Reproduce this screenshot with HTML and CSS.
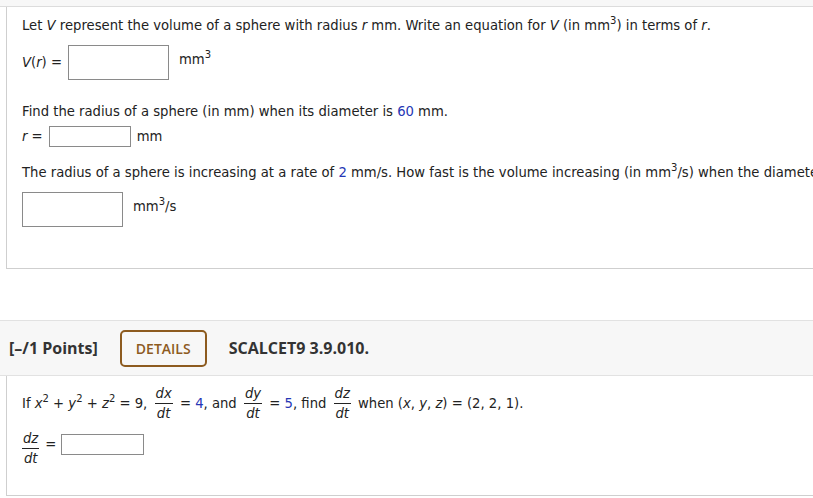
FILE: index.html
```html
<!DOCTYPE html>
<html>
<head>
<meta charset="utf-8">
<link rel="stylesheet" href="styles.css">
</head>
<body>
<div class="topbar"></div>
<div class="qbody q1">
  <p class="line l1">Let <i>V</i> represent the volume of a sphere with radius <i>r</i> mm. Write an equation for <i>V</i> (in mm<sup>3</sup>) in terms of <i>r</i>.</p>
  <div class="row r1"><span><i>V</i>(<i>r</i>) =</span><span class="box big"></span><span class="unit">mm<sup>3</sup></span></div>
  <p class="line l2">Find the radius of a sphere (in mm) when its diameter is <span class="num">60</span> mm.</p>
  <div class="row r2"><span><i>r</i> =</span><span class="box small"></span><span class="unit2">mm</span></div>
  <p class="line l3">The radius of a sphere is increasing at a rate of <span class="num">2</span> mm/s. How fast is the volume increasing (in mm<sup>3</sup>/s) when the diameter is <span class="num">60</span> mm?</p>
  <div class="row r3"><span class="box big"></span><span class="unit">mm<sup>3</sup>/s</span></div>
</div>
<div class="header">
  <span class="points">[–/1 Points]</span>
  <span class="details">DETAILS</span>
  <span class="code">SCALCET9 3.9.010.</span>
</div>
<div class="qbody q2">
  <div class="eq">If <i>x</i><sup>2</sup> + <i>y</i><sup>2</sup> + <i>z</i><sup>2</sup> = 9, <span class="frac"><span class="n"><i>dx</i></span><span class="d"><i>dt</i></span></span> = <span class="num">4</span>, and <span class="frac"><span class="n"><i>dy</i></span><span class="d"><i>dt</i></span></span> = <span class="num">5</span>, find <span class="frac"><span class="n"><i>dz</i></span><span class="d"><i>dt</i></span></span> when (<i>x</i>, <i>y</i>, <i>z</i>) = (2, 2, 1).</div>
  <div class="ans"><span class="frac"><span class="n"><i>dz</i></span><span class="d"><i>dt</i></span></span><span class="eqs">=</span><span class="box mid"></span></div>
</div>
</body>
</html>
```
FILE: styles.css
```css
html, body {
  margin: 0;
  padding: 0;
  background: #fff;
  overflow: hidden;
  width: 813px;
  height: 498px;
}
body {
  font-family: "DejaVu Sans", Verdana, sans-serif;
  font-size: 13.2px;
  color: #222;
}
.topbar {
  height: 6px;
  background: #f7f7f7;
  border-bottom: 1px solid #dcdcdc;
}
.qbody {
  margin-left: 6px;
  border-left: 1px solid #cfcfcf;
  border-bottom: 1px solid #cfcfcf;
  padding-left: 15px;
  box-sizing: border-box;
  white-space: nowrap;
  overflow: hidden;
}
.q1 {
  height: 262px;
  padding-top: 11px;
}
p.line {
  margin: 0;
  line-height: 16px;
}
sup {
  font-size: 10px;
  line-height: 0;
  vertical-align: 6px;
}
.num { color: #2536b5; }
.row {
  display: flex;
  align-items: center;
}
.box {
  display: inline-block;
  border: 1px solid #8a8a8a;
  background: #fff;
  box-sizing: border-box;
}
.big { width: 101px; height: 35px; }
.small { width: 82px; height: 21px; }
.mid { width: 83px; height: 21px; }
.r1 { margin-top: 11px; }
.r1 .box { margin-left: 6px; }
.unit { margin-left: 10px; margin-top: -6px; }
.l2 { margin-top: 24px !important; }
.r2 { margin-top: 6px; }
.r2 .box { margin-left: 6px; }
.unit2 { margin-left: 6px; }
.l3 { margin-top: 18px !important; }
.r3 { margin-top: 11px; }
.header {
  margin-top: 51px;
  height: 54px;
  background: #f7f7f7;
  border-top: 1px solid #e2e2e2;
  border-bottom: 1px solid #e2e2e2;
  display: flex;
  align-items: center;
  padding-left: 9px;
  font-family: "Open Sans", sans-serif;
  font-weight: 700;
  color: #333;
  font-size: 16px;
}
.details {
  margin-left: 22px;
  width: 87px;
  height: 37px;
  box-sizing: border-box;
  border: 2px solid #8d5b1f;
  border-radius: 5px;
  color: #8d5b1f;
  font-size: 14px;
  font-weight: 600;
  display: flex;
  align-items: center;
  justify-content: center;
}
.code { margin-left: 22px; }
.q2 {
  height: 120px;
  padding-top: 8px;
}
.eq {
  line-height: 40px;
}
.frac {
  display: inline-flex;
  flex-direction: column;
  align-items: center;
  vertical-align: middle;
  line-height: 17px;
  margin: -2px 3px 0;
}
.frac .n { border-bottom: 1px solid #222; padding: 0 1px 1px; }
.frac .d { padding-top: 1px; }
.ans {
  display: flex;
  align-items: center;
  margin-top: 6px;
}
.ans .frac { margin: 0; }
.eqs { margin-left: 6px; margin-right: 5px; margin-top: -8px; }
.ans .box { margin-top: -9px; }
```
